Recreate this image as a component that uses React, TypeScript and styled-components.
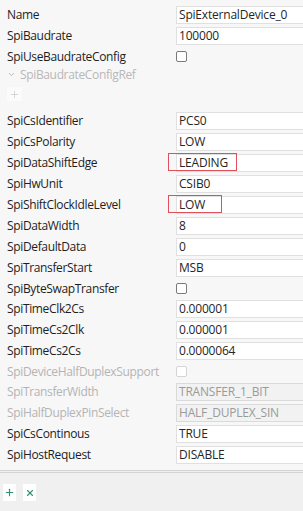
import React from "react";
import styled, { createGlobalStyle } from "styled-components";
import { ChevronDown, Plus, X } from "lucide-react";

type Kind = "text" | "check";

interface IParam {
  name: string;
  kind: Kind;
  value?: string;
  disabled?: boolean;
  mark?: number;
}

const general: IParam[] = [
  { name: "Name", kind: "text", value: "SpiExternalDevice_0" },
  { name: "SpiBaudrate", kind: "text", value: "100000" },
  { name: "SpiUseBaudrateConfig", kind: "check" },
];

const params: IParam[] = [
  { name: "SpiCsIdentifier", kind: "text", value: "PCS0" },
  { name: "SpiCsPolarity", kind: "text", value: "LOW" },
  { name: "SpiDataShiftEdge", kind: "text", value: "LEADING", mark: 69 },
  { name: "SpiHwUnit", kind: "text", value: "CSIB0" },
  { name: "SpiShiftClockIdleLevel", kind: "text", value: "LOW", mark: 54 },
  { name: "SpiDataWidth", kind: "text", value: "8" },
  { name: "SpiDefaultData", kind: "text", value: "0" },
  { name: "SpiTransferStart", kind: "text", value: "MSB" },
  { name: "SpiByteSwapTransfer", kind: "check" },
  { name: "SpiTimeClk2Cs", kind: "text", value: "0.000001" },
  { name: "SpiTimeCs2Clk", kind: "text", value: "0.000001" },
  { name: "SpiTimeCs2Cs", kind: "text", value: "0.0000064" },
  { name: "SpiDeviceHalfDuplexSupport", kind: "check", disabled: true },
  { name: "SpiTransferWidth", kind: "text", value: "TRANSFER_1_BIT", disabled: true },
  { name: "SpiHalfDuplexPinSelect", kind: "text", value: "HALF_DUPLEX_SIN", disabled: true },
  { name: "SpiCsContinous", kind: "text", value: "TRUE" },
  { name: "SpiHostRequest", kind: "text", value: "DISABLE" },
];

export default function App() {
  return (
    <>
      <GlobalStyle />
      <Page>
        <Editor>
          <Section>
            {general.map((p) => (
              <ParamRow key={p.name} param={p} />
            ))}
            <RefHeader>
              <ChevronDown size={9} strokeWidth={2.5} />
              <span>SpiBaudrateConfigRef</span>
            </RefHeader>
            <AddRefButton>
              <Plus size={11} strokeWidth={1.4} />
            </AddRefButton>
          </Section>
          <Section>
            {params.map((p) => (
              <ParamRow key={p.name} param={p} />
            ))}
          </Section>
        </Editor>
        <Footer>
          <ToolButton title="add">
            <Plus size={11} strokeWidth={2.4} />
          </ToolButton>
          <ToolButton title="remove">
            <X size={10} strokeWidth={2.6} />
          </ToolButton>
        </Footer>
      </Page>
    </>
  );
}

const ParamRow = ({ param }: { param: IParam }) => {
  return (
    <Row kind={param.kind}>
      <Label disabled={param.disabled}>{param.name}</Label>
      <ValueCell>
        {param.kind === "check" ? (
          <CheckBox disabled={param.disabled} />
        ) : (
          <Field disabled={param.disabled}>{param.value}</Field>
        )}
        {param.mark && <Mark style={{ width: param.mark }} />}
      </ValueCell>
    </Row>
  );
};

const GlobalStyle = createGlobalStyle`
  html, body {
    margin: 0;
    padding: 0;
    background: #f0f0f0;
  }
  body {
    font-family: "Open Sans", "Noto Sans", "Liberation Sans", sans-serif;
    font-size: 12px;
    color: #1e1e1e;
  }
`;

const Page = styled.div`
  width: 303px;
  height: 511px;
  display: flex;
  flex-direction: column;
  overflow: hidden;
`;

const Editor = styled.div`
  background: #f7f7f7;
  padding: 4px 0 5px 0;
  display: flex;
  flex-direction: column;
  gap: 9px;
`;

const Section = styled.div`
  display: flex;
  flex-direction: column;
`;

const Row = styled.div<{ kind: Kind }>`
  display: grid;
  grid-template-columns: 176px 1fr;
  align-items: center;
  height: ${(p) => (p.kind === "check" ? 20 : 21)}px;
`;

const Label = styled.div<{ disabled?: boolean }>`
  padding-left: 7px;
  white-space: nowrap;
  letter-spacing: -0.35px;
  color: ${(p) => (p.disabled ? "#b4b4b4" : "#1e1e1e")};
`;

const ValueCell = styled.div`
  position: relative;
  display: flex;
  align-items: center;
  height: 100%;
`;

const Field = styled.div<{ disabled?: boolean }>`
  flex: 1;
  height: 18px;
  box-sizing: border-box;
  padding: 0 2px;
  line-height: 16px;
  white-space: nowrap;
  overflow: hidden;
  letter-spacing: -0.2px;
  border: 1px solid ${(p) => (p.disabled ? "#dadada" : "#e0e0e0")};
  border-right: none;
  background: ${(p) => (p.disabled ? "#f2f2f2" : "#ffffff")};
  color: ${(p) => (p.disabled ? "#9a9a9a" : "#262626")};
`;

const CheckBox = styled.span<{ disabled?: boolean }>`
  width: 11px;
  height: 11px;
  box-sizing: border-box;
  border-radius: 2px;
  background: #fff;
  border: 1px solid ${(p) => (p.disabled ? "#d4d4d4" : "#7a7a7a")};
`;

const Mark = styled.span`
  position: absolute;
  left: -8px;
  top: 1px;
  height: 18px;
  box-sizing: border-box;
  border: 1px solid #e0505c;
`;

const RefHeader = styled.div`
  height: 16px;
  display: flex;
  align-items: center;
  gap: 4px;
  padding-left: 7px;
  color: #b8b8b8;
  letter-spacing: -0.35px;
`;

const AddRefButton = styled.div`
  margin: 5px 0 0 7px;
  width: 15px;
  height: 14px;
  display: flex;
  align-items: center;
  justify-content: center;
  background: #fbfbfb;
  color: #c4c4c4;
`;

const Footer = styled.div`
  flex: 1;
  border-top: 3px double #d4d4d4;
  background: #f0f0f0;
  display: flex;
  gap: 7px;
  padding: 11px 0 0 3px;
  align-items: flex-start;
`;

const ToolButton = styled.div`
  width: 13px;
  height: 17px;
  display: flex;
  align-items: center;
  justify-content: center;
  background: #ffffff;
  color: #2f8f72;
`;
